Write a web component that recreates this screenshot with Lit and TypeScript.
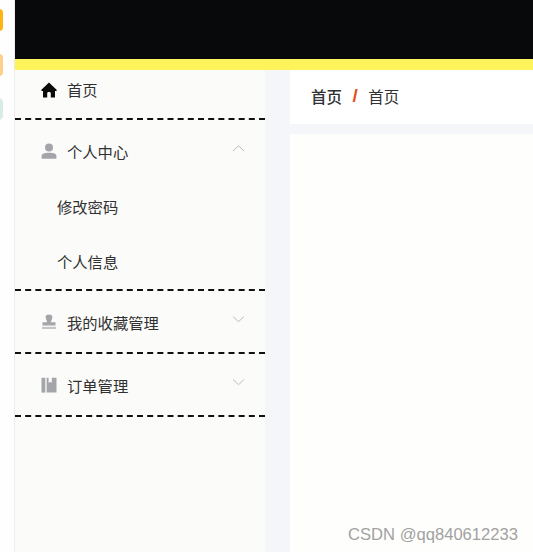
import { LitElement, css, html, svg } from 'lit';
import { customElement } from 'lit/decorators.js';

const ICONS = {
  home: svg`<path d="M8 0.6 L0.4 7.8 V9 H2 V15.4 H6.2 V11.4 C6.2 10.5 7 10 8 10 C9 10 9.8 10.5 9.8 11.4 V15.4 H14 V9 H15.6 V7.8 Z" fill="#0b0b0b"/>`,
  user: svg`<circle cx="8" cy="4.4" r="4" fill="#a3a5ab"/><path d="M0.6 15.8 V13 C0.6 10.6 3 9.7 8 9.7 C13 9.7 15.4 10.6 15.4 13 V15.8 Z" fill="#a3a5ab"/>`,
  stamp: svg`<path d="M4.6 3 C4.6 -0.2 11.4 -0.2 11.4 3 C11.4 5.4 10 6.4 10 8.2 H14.5 V11.4 H1.5 V8.2 H6 C6 6.4 4.6 5.4 4.6 3 Z" fill="#a3a5ab"/><rect x="1" y="12.8" width="14" height="2.2" fill="#c4c6ca"/>`,
  order: svg`<rect x="0.5" y="0.8" width="3.8" height="14.8" fill="#a3a5ab"/><path d="M5.6 0.8 H7.6 V6 L9.2 4.8 L10.8 6 V0.8 H15.5 V15.6 H5.6 Z" fill="#a3a5ab"/>`,
};

const CHEVRON_UP = svg`<path d="M1 7 L6.5 1.8 L12 7" fill="none" stroke="#b9bbbf" stroke-width="1"/>`;
const CHEVRON_DOWN = svg`<path d="M1 1.5 L6.5 6.7 L12 1.5" fill="none" stroke="#b9bbbf" stroke-width="1"/>`;

@customElement('app-root')
export class AppRoot extends LitElement {
  static styles = css`
    :host {
      display: block;
      position: relative;
      width: 533px;
      height: 552px;
      overflow: hidden;
      background: #fefefe;
      font-family: 'Liberation Sans', 'Noto Sans CJK SC', sans-serif;
      color: #303030;
      font-size: 15.3px;
    }

    .chip {
      position: absolute;
      left: -12px;
      width: 15px;
      height: 22px;
      border-radius: 4px;
    }
    .chip.a { top: 9px; background: #fdb512; }
    .chip.b { top: 54px; background: #fdd08a; }
    .chip.c { top: 98px; background: #d3efe3; border: 1px solid #e6e6e6; box-sizing: border-box; }

    .shell {
      margin-left: 14px;
      height: 100%;
      display: flex;
      flex-direction: column;
      border-left: 1px solid #ececec;
    }

    .top {
      height: 59px;
      background: #07090b;
      flex: none;
    }
    .stripe {
      height: 11px;
      background: #fef35a;
      flex: none;
    }

    .body {
      flex: 1;
      display: flex;
      background: #f5f6f9;
    }

    .side {
      width: 250px;
      flex: none;
      background: #fbfbfa;
    }

    .group {
      border-bottom: 2px dashed #111;
    }

    .row {
      height: 61px;
      display: flex;
      align-items: center;
      padding: 0 20px 0 26px;
      gap: 10px;
    }
    .row.first {
      height: 48px;
      align-items: flex-start;
      padding-top: 12px;
      box-sizing: border-box;
    }
    .row svg.icon {
      width: 16px;
      height: 16px;
      flex: none;
    }
    .label {
      flex: 1;
      line-height: 18px;
      padding-top: 4px;
    }
    .row.first .label {
      padding-top: 0;
    }
    .chev {
      width: 13px;
      height: 9px;
      margin-top: -4px;
      flex: none;
    }

    .sub {
      height: 55px;
      display: flex;
      align-items: center;
      padding-left: 42px;
      padding-top: 4px;
      box-sizing: border-box;
      line-height: 18px;
    }
    .sub.start {
      margin-top: -3px;
    }
    .subs {
      padding-bottom: 1px;
    }

    .main {
      flex: 1;
      margin-left: 25px;
      display: flex;
      flex-direction: column;
      gap: 10px;
    }

    .crumb {
      height: 54px;
      flex: none;
      background: #fff;
      display: flex;
      align-items: center;
      padding: 0 0 2px 21px;
      box-sizing: border-box;
      font-size: 15.5px;
      color: #303133;
    }
    .crumb b {
      font-weight: 500;
    }
    .crumb i {
      font-style: normal;
      font-weight: 700;
      font-size: 19px;
      line-height: 20px;
      color: #e4501c;
      margin: 0 10.5px;
    }

    .content {
      flex: 1;
      background: #fefefc;
    }

    .mark {
      position: absolute;
      right: 15px;
      bottom: 8px;
      font-size: 16.6px;
      line-height: 18px;
      color: #a2a2a2;
    }
  `;

  private icon(name: keyof typeof ICONS) {
    return html`<svg class="icon" viewBox="0 0 16 16">${ICONS[name]}</svg>`;
  }

  private chevron(up: boolean) {
    return html`<svg class="chev" viewBox="0 0 13 9">${up ? CHEVRON_UP : CHEVRON_DOWN}</svg>`;
  }

  render() {
    return html`
      <span class="chip a"></span>
      <span class="chip b"></span>
      <span class="chip c"></span>
      <div class="shell">
        <div class="top"></div>
        <div class="stripe"></div>
        <div class="body">
          <nav class="side">
            <div class="group">
              <div class="row first">${this.icon('home')}<span class="label">首页</span></div>
            </div>
            <div class="group">
              <div class="row">${this.icon('user')}<span class="label">个人中心</span>${this.chevron(true)}</div>
              <div class="subs">
                <div class="sub start">修改密码</div>
                <div class="sub">个人信息</div>
              </div>
            </div>
            <div class="group">
              <div class="row">${this.icon('stamp')}<span class="label">我的收藏管理</span>${this.chevron(false)}</div>
            </div>
            <div class="group">
              <div class="row">${this.icon('order')}<span class="label">订单管理</span>${this.chevron(false)}</div>
            </div>
          </nav>
          <div class="main">
            <div class="crumb"><b>首页</b><i>/</i><span>首页</span></div>
            <div class="content"></div>
          </div>
        </div>
      </div>
      <div class="mark">CSDN @qq840612233</div>
    `;
  }
}

declare global {
  interface HTMLElementTagNameMap {
    'app-root': AppRoot;
  }
}
